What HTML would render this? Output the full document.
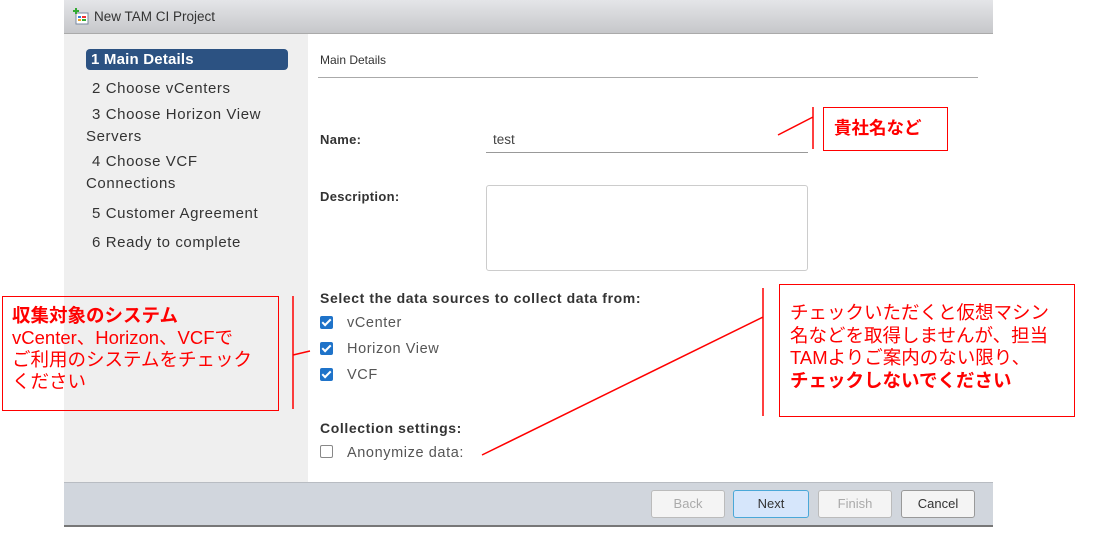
<!DOCTYPE html>
<html><head><meta charset="utf-8"><style>
*{margin:0;padding:0;box-sizing:border-box}
body{width:1098px;height:556px;background:#fff;position:relative;overflow:hidden;font-family:"Liberation Sans","Noto Sans CJK JP",sans-serif;color:#333}
.a{position:absolute;white-space:nowrap}
.title{left:64px;top:0;width:929px;height:34px;background:linear-gradient(#e4e5e8,#c6c7ca);border-bottom:1px solid #aaa}
.side{left:64px;top:34px;width:244px;height:448px;background:#efefef}
.foot{left:64px;top:482px;width:929px;height:45px;background:#d1d6dd;border-top:1px solid #b8bcc2;border-bottom:2px solid #777}
.nav{font-size:15px;letter-spacing:0.6px;color:#333}
.lbl{font-size:13px;color:#333;font-weight:bold;letter-spacing:0.3px}
.btn{position:absolute;top:490px;height:28px;border:1px solid #bbb;border-radius:3px;background:#f4f4f4;font-size:13px;text-align:center;line-height:26px;color:#aaa}
.cb{position:absolute;left:320px;width:13px;height:13px;border-radius:2px;background:#1f73c9}
.cb:after{content:"";position:absolute;left:4px;top:1px;width:3px;height:7px;border:solid #fff;border-width:0 2px 2px 0;transform:rotate(45deg)}
.opt{font-size:14.5px;color:#555;letter-spacing:0.6px}
.red{color:#f00}
</style></head><body>
<div class="a title"></div>
<svg class="a" style="left:72px;top:8px" width="18" height="18"><rect x="4" y="5" width="12" height="11" fill="#fff" stroke="#7a8aa0"/><rect x="6" y="8" width="3" height="2" fill="#3a7bd5"/><rect x="10" y="8" width="4" height="2" fill="#e33"/><rect x="6" y="11" width="3" height="2" fill="#f0a020"/><rect x="10" y="11" width="4" height="2" fill="#3a3"/><path d="M4 0v6M1 3h6" stroke="#3a3" stroke-width="2"/></svg>
<div class="a" style="left:94px;top:9px;font-size:13.5px;color:#333">New TAM CI Project</div>
<div class="a side"></div>
<div class="a" style="left:86px;top:49px;width:202px;height:21px;background:#2c5282;border-radius:4px"></div>
<div class="a nav" style="left:91px;top:51px;color:#fff;font-weight:bold;letter-spacing:0.2px">1 Main Details</div>
<div class="a nav" style="left:92px;top:80px">2 Choose vCenters</div>
<div class="a nav" style="left:92px;top:106px">3 Choose Horizon View</div>
<div class="a nav" style="left:86px;top:128px">Servers</div>
<div class="a nav" style="left:92px;top:153px">4 Choose VCF</div>
<div class="a nav" style="left:86px;top:175px">Connections</div>
<div class="a nav" style="left:92px;top:205px">5 Customer Agreement</div>
<div class="a nav" style="left:92px;top:234px">6 Ready to complete</div>
<div class="a" style="left:320px;top:53px;font-size:12px;color:#333">Main Details</div>
<div class="a" style="left:318px;top:77px;width:660px;height:1px;background:#aaa"></div>
<div class="a lbl" style="left:320px;top:132px">Name:</div>
<div class="a" style="left:493px;top:132px;font-size:13.5px;color:#444">test</div>
<div class="a" style="left:486px;top:152px;width:322px;height:1px;background:#999"></div>
<div class="a lbl" style="left:320px;top:189px">Description:</div>
<div class="a" style="left:486px;top:185px;width:322px;height:86px;border:1px solid #ccc;border-radius:3px"></div>
<div class="a lbl" style="left:320px;top:290px;font-size:14px;letter-spacing:0.6px">Select the data sources to collect data from:</div>
<div class="cb" style="top:316px"></div><div class="a opt" style="left:347px;top:315px">vCenter</div>
<div class="cb" style="top:342px"></div><div class="a opt" style="left:347px;top:341px">Horizon View</div>
<div class="cb" style="top:368px"></div><div class="a opt" style="left:347px;top:367px">VCF</div>
<div class="a lbl" style="left:320px;top:420px;font-size:14px;letter-spacing:0.6px">Collection settings:</div>
<div class="a" style="left:320px;top:445px;width:13px;height:13px;border:1px solid #888;border-radius:2px"></div>
<div class="a opt" style="left:347px;top:445px">Anonymize data:</div>
<div class="a foot"></div>
<div class="btn" style="left:651px;width:74px">Back</div>
<div class="btn" style="left:733px;width:76px;border:1px solid #4aa8d8;background:#d6e6fb;color:#333">Next</div>
<div class="btn" style="left:818px;width:74px">Finish</div>
<div class="btn" style="left:901px;width:74px;border-color:#999;color:#333">Cancel</div>
<svg class="a" style="left:0;top:0" width="1098" height="556"><g stroke="#f00" stroke-width="1.5" fill="none">
<rect x="2.5" y="296.5" width="276" height="114" stroke-width="1"/>
<path d="M293 296V409M293 355L310 351"/>
<rect x="823.5" y="107.5" width="124" height="43" stroke-width="1"/>
<path d="M813 107V149M813 117L778 135"/>
<rect x="779.5" y="284.5" width="295" height="132" stroke-width="1"/>
<path d="M763 288V416M763 317L482 455"/>
</g></svg>
<div class="a red" style="left:834px;top:115px;font-size:17.5px;font-weight:bold">貴社名など</div>
<div class="a red" style="left:12px;top:305px;font-size:18.5px;line-height:22px"><b>収集対象のシステム</b><br>vCenter、Horizon、VCFで<br>ご利用のシステムをチェック<br>ください</div>
<div class="a red" style="left:790px;top:302px;font-size:18.5px;line-height:22.5px">チェックいただくと仮想マシン<br>名などを取得しませんが、担当<br>TAMよりご案内のない限り、<br><b>チェックしないでください</b></div>
</body></html>
